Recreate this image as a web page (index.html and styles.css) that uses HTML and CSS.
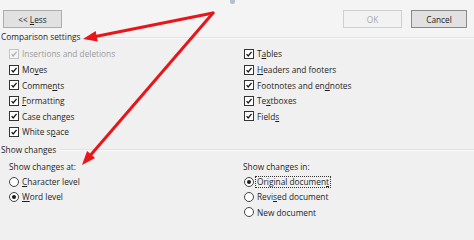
FILE: index.html
```html
<!DOCTYPE html>
<html>
<head>
<meta charset="utf-8">
<link rel="stylesheet" href="styles.css">
</head>
<body>
<div class="dialog">
  <div class="topbar">
    <button class="btn btn-less">&lt;&lt; <span class="ak">L</span>ess</button>
    <div class="spacer"></div>
    <button class="btn btn-ok" disabled>OK</button>
    <button class="btn btn-cancel">Cancel</button>
  </div>

  <div class="group-head"><span class="group-title">Comparison settings</span><span class="group-line"></span></div>

  <div class="cols">
    <div class="col">
      <div class="row disabled"><span class="cb"><svg viewBox="0 0 10 10"><path d="M2 5.2 L4 7.4 L8.2 2.4"/></svg></span><span>Insertions and deletions</span></div>
      <div class="row"><span class="cb"><svg viewBox="0 0 10 10"><path d="M2 5.2 L4 7.4 L8.2 2.4"/></svg></span><span>Mo<span class="ak">v</span>es</span></div>
      <div class="row"><span class="cb"><svg viewBox="0 0 10 10"><path d="M2 5.2 L4 7.4 L8.2 2.4"/></svg></span><span>Comme<span class="ak">n</span>ts</span></div>
      <div class="row"><span class="cb"><svg viewBox="0 0 10 10"><path d="M2 5.2 L4 7.4 L8.2 2.4"/></svg></span><span><span class="ak">F</span>ormatting</span></div>
      <div class="row"><span class="cb"><svg viewBox="0 0 10 10"><path d="M2 5.2 L4 7.4 L8.2 2.4"/></svg></span><span>Case changes</span></div>
      <div class="row"><span class="cb"><svg viewBox="0 0 10 10"><path d="M2 5.2 L4 7.4 L8.2 2.4"/></svg></span><span>White s<span class="ak">p</span>ace</span></div>
    </div>
    <div class="col col-right">
      <div class="row"><span class="cb"><svg viewBox="0 0 10 10"><path d="M2 5.2 L4 7.4 L8.2 2.4"/></svg></span><span>T<span class="ak">a</span>bles</span></div>
      <div class="row"><span class="cb"><svg viewBox="0 0 10 10"><path d="M2 5.2 L4 7.4 L8.2 2.4"/></svg></span><span><span class="ak">H</span>eaders and footers</span></div>
      <div class="row"><span class="cb"><svg viewBox="0 0 10 10"><path d="M2 5.2 L4 7.4 L8.2 2.4"/></svg></span><span>Footnotes and en<span class="ak">d</span>notes</span></div>
      <div class="row"><span class="cb"><svg viewBox="0 0 10 10"><path d="M2 5.2 L4 7.4 L8.2 2.4"/></svg></span><span>Te<span class="ak">x</span>tboxes</span></div>
      <div class="row"><span class="cb"><svg viewBox="0 0 10 10"><path d="M2 5.2 L4 7.4 L8.2 2.4"/></svg></span><span>Field<span class="ak">s</span></span></div>
    </div>
  </div>

  <div class="group-head group-head-2"><span class="group-title">Show changes</span><span class="group-line"></span></div>

  <div class="cols cols-2">
    <div class="col">
      <div class="sublabel">Show changes at:</div>
      <div class="row2"><span class="radio"></span><span><span class="ak">C</span>haracter level</span></div>
      <div class="row2"><span class="radio on"></span><span><span class="ak">W</span>ord level</span></div>
    </div>
    <div class="col col-right2">
      <div class="sublabel">Show changes in:</div>
      <div class="row2"><span class="radio on"></span><span class="focus">Original documen<span class="ak">t</span></span></div>
      <div class="row2"><span class="radio"></span><span>Revi<span class="ak">s</span>ed document</span></div>
      <div class="row2"><span class="radio"></span><span>New doc<span class="ak">u</span>ment</span></div>
    </div>
  </div>
</div>

<span class="topicon"></span>

<svg class="arrows" width="474" height="217" viewBox="0 0 474 217">
  <line x1="213" y1="13" x2="96.7" y2="36.25" stroke="#e8161b" stroke-width="3" stroke-linecap="round"/>
  <polygon points="83,39 97.7,41.4 95.7,31.1" fill="#e8161b"/>
  <line x1="213" y1="13" x2="91.1" y2="154.4" stroke="#e8161b" stroke-width="3" stroke-linecap="round"/>
  <polygon points="82,165 95.1,157.9 87.1,150.9" fill="#e8161b"/>
</svg>
</body>
</html>
```

FILE: styles.css
```css
html, body {
  margin: 0;
  padding: 0;
}
body {
  width: 474px;
  height: 217px;
  overflow: hidden;
  background: #f0f0f0;
  font-family: "Open Sans", "Noto Sans", sans-serif;
  font-size: 8.3px;
  color: #1e1e1e;
  position: relative;
}
.dialog {
  display: flex;
  flex-direction: column;
}
.topbar {
  display: flex;
  align-items: center;
  padding: 10px 7px 0 3px;
  height: 18px;
  background: #f4f4f4;
}
.spacer { flex: 1; }
.btn {
  height: 18px;
  box-sizing: border-box;
  font-family: inherit;
  font-size: 8.3px;
  color: #222;
  background: #e1e1e1;
  border: 1px solid #adadad;
  padding: 0;
  margin: 0;
}
.btn-less { width: 59px; }
.btn-ok {
  width: 59px;
  background: #f2f2f2;
  border-color: #cfcfcf;
  color: #a8a8a8;
  margin-right: 9px;
}
.btn-cancel {
  width: 56px;
  border-color: #8a8a8a;
}
.ak { text-decoration: underline; }

.group-head {
  display: flex;
  align-items: center;
  height: 12px;
  line-height: 12px;
  padding-top: 3px;
  background: linear-gradient(#f4f4f4 0 9px, #f0f0f0 9px);
}
.group-title {
  padding-left: 1px;
  padding-right: 4px;
  white-space: nowrap;
}
.group-line {
  flex: 1;
  height: 1px;
  background: #e2e2e2;
  box-shadow: 0 1px 0 #fafafa;
}
.cols {
  display: grid;
  grid-template-columns: 234px 1fr;
  padding-left: 9px;
  padding-top: 3.2px;
}
.col-right { padding-left: 1px; }
.row {
  display: flex;
  align-items: center;
  height: 15.6px;
  white-space: nowrap;
}
.cb {
  width: 10px;
  height: 10px;
  box-sizing: border-box;
  border: 1px solid #333;
  background: #fff;
  margin-right: 3px;
  display: flex;
}
.cb svg {
  width: 8px;
  height: 8px;
  fill: none;
  stroke: #1a1a1a;
  stroke-width: 1.7;
}
.row.disabled { color: #9a9a9a; }
.row.disabled .cb { border-color: #c4c4c4; background: #f4f4f4; }
.row.disabled .cb svg { stroke: #b0b0b0; }

.group-head-2 {
  padding-top: 4.2px;
  background: none;
}
.cols-2 { padding-top: 2.6px; }
.sublabel {
  height: 15.4px;
  line-height: 15.4px;
  white-space: nowrap;
}
.col-right2 { padding-left: 0; }
.col-right2 .row2 { padding-left: 1px; }
.row2 {
  display: flex;
  align-items: center;
  height: 15.3px;
  white-space: nowrap;
}
.radio {
  width: 10px;
  height: 10px;
  box-sizing: border-box;
  border: 1px solid #444;
  border-radius: 50%;
  background: #fff;
  margin-right: 3px;
  display: flex;
  align-items: center;
  justify-content: center;
}
.radio.on::after {
  content: "";
  width: 4px;
  height: 4px;
  border-radius: 50%;
  background: #1a1a1a;
}
.focus {
  outline: 1px dotted #333;
  outline-offset: 0;
  padding: 0 1px;
  margin-left: -1px;
  line-height: 10px;
}
.topicon {
  position: absolute;
  left: 230px;
  top: 0;
  width: 5px;
  height: 4px;
  background: #b4bfd0;
  border-radius: 0 0 2px 2px;
}
.arrows {
  position: absolute;
  left: 0;
  top: 0;
  pointer-events: none;
}
```
